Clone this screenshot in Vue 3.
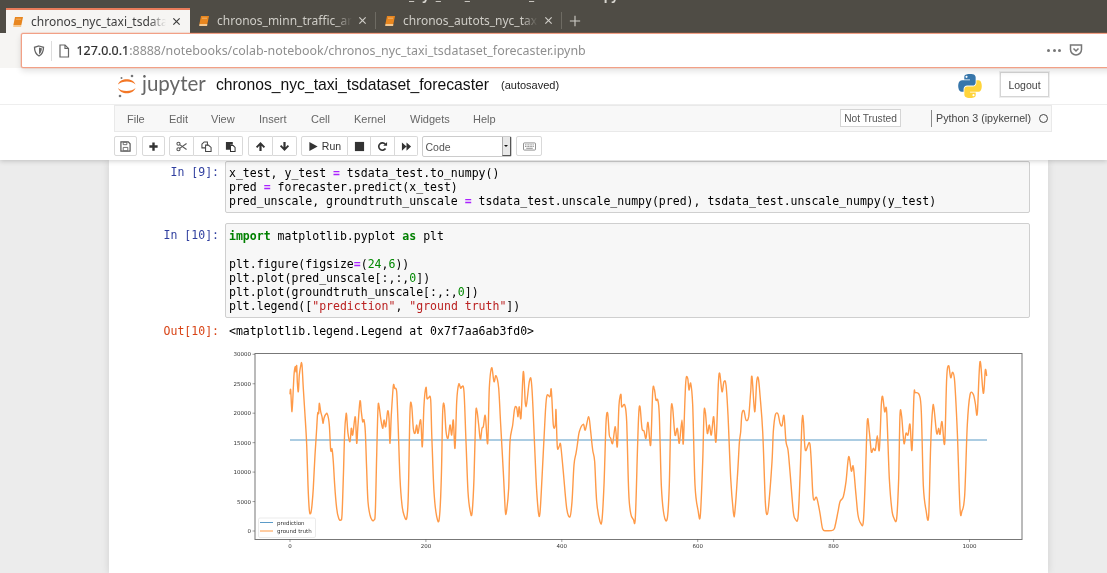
<template>
  <div class="page">
    <div class="wm-title">chronos_nyc_taxi_tsdataset_forecaster.ipynb</div>

    <div class="tabstrip">
      <div v-for="(tab, i) in tabs" :key="tab" class="tab" :class="{ active: i === 0, sep: i > 0 }">
        <svg class="tab-icon" viewBox="0 0 12 12">
          <path d="M3 1h8l-1.600 8H1.400z" fill="#e8861f" />
          <path d="M1.400 9h8l-.3 2H1.200z" fill="#f5c78e" />
          <path d="M4 3.200h5" stroke="#f5c78e" stroke-width=".7" />
        </svg>
        <span class="tab-text">{{ tab }}</span>
        <svg class="tab-close" viewBox="0 0 10 10"><path d="M1.500 1.500l7 7M8.500 1.500l-7 7" /></svg>
      </div>
      <svg class="newtab" viewBox="0 0 14 14"><path d="M7 1v12M1 7h12" /></svg>
    </div>

    <div class="urlrow">
      <div class="urlbar">
        <svg class="shield" viewBox="0 0 12 12">
          <path d="M6 1l4.500 1.300c0 4-1 7-4.500 8.700C2.500 9.300 1.500 6.300 1.500 2.300z" fill="#fff" stroke="#666" stroke-width="1.300" />
          <path d="M6 2.500l2.800.8C8.800 6 8 8 6 9.300z" fill="#666" />
        </svg>
        <span class="url-sep"></span>
        <svg class="pageicon" viewBox="0 0 12 14">
          <path d="M2 1h5l3.500 3.500V13H2z" fill="none" stroke="#666" stroke-width="1.200" />
          <path d="M7 1v3.500h3.500" fill="none" stroke="#666" stroke-width="1.200" />
        </svg>
        <span class="url"><b>127.0.0.1</b>:8888/notebooks/colab-notebook/chronos_nyc_taxi_tsdataset_forecaster.ipynb</span>
        <span class="dots"><i></i><i></i><i></i></span>
        <svg class="pocket" viewBox="0 0 14 14">
          <path d="M1.500 2h11v4.500a5.500 5.500 0 0 1-11 0z" fill="none" stroke="#777" stroke-width="1.500" />
          <path d="M4.500 5.500L7 8l2.500-2.500" fill="none" stroke="#777" stroke-width="1.500" />
        </svg>
      </div>
    </div>

    <header class="site-header">
      <div class="brand-row">
        <svg class="jp-mark" viewBox="0 0 20 24">
          <path d="M1 10.500C3 3.500 16 3.500 18.500 10.500C15 6.500 5 6.500 1 10.500z" fill="#f37726" />
          <path d="M1 14C4 18 15 18 18.500 14C16 21 3.500 21 1 14z" fill="#f37726" />
          <circle cx="15" cy="2" r="1.300" fill="#767677" />
          <circle cx="4.500" cy="4" r="1" fill="#767677" />
          <circle cx="3" cy="22" r="1.300" fill="#767677" />
        </svg>
        <span class="jp-word">jupyter</span>
        <span class="nb-name">chronos_nyc_taxi_tsdataset_forecaster</span>
        <span class="autosaved">(autosaved)</span>
        <svg class="py-logo" viewBox="0 0 110 110">
          <path fill="#3776ab" d="M54.900 0c-4.600 0-9 .4-12.800 1.100C30.800 3.100 28.800 7.200 28.800 14.900V25h26v3.400H19.100c-7.600 0-14.200 4.600-16.300 13.200-2.400 9.900-2.500 16 0 26.300 1.800 7.700 6.300 13.200 13.800 13.200h9V68.900c0-8.600 7.400-16.100 16.300-16.100h26c7.200 0 13-6 13-13.200V14.900c0-7.100-6-12.400-13-13.600C63.500.4 59 0 54.900 0z" />
          <path fill="#ffd43b" d="M55.100 110c4.600 0 9-.4 12.800-1.100 11.300-2 13.300-6.100 13.300-13.800V85h-26v-3.400h35.700c7.600 0 14.200-4.600 16.300-13.200 2.400-9.900 2.500-16 0-26.300-1.800-7.700-6.300-13.200-13.800-13.200h-9v12.200c0 8.600-7.400 16.100-16.300 16.100h-26c-7.200 0-13 6-13 13.200v24.700c0 7.100 6 12.400 13 13.600 4.400.9 8.900 1.300 13 1.300z" />
          <circle cx="39" cy="13" r="5" fill="#fff" />
          <circle cx="71" cy="97" r="5" fill="#fff" />
        </svg>
        <span class="logout">Logout</span>
      </div>

      <nav class="menubar">
        <span v-for="m in menus" :key="m.label" class="menu-item" :style="{ width: m.w + 'px' }">{{ m.label }}</span>
        <span class="not-trusted">Not Trusted</span>
        <span class="kernel">Python 3 (ipykernel)</span>
        <span class="kernel-dot"></span>
      </nav>

      <div class="toolbar">
        <div class="btn-group">
          <button class="tb w23"><svg viewBox="0 0 12 12"><path d="M1 1h8l2 2v8H1z" fill="none" stroke="#555" stroke-width="1.300" /><path d="M3.500 1.500h4v2.500h-4zM3.500 7h5v3.500h-5z" fill="#fff" stroke="#555" stroke-width=".9" /></svg></button>
        </div>
        <div class="btn-group">
          <button class="tb w23"><svg viewBox="0 0 12 12"><path d="M6 1.500v9M1.500 6h9" stroke="#333" stroke-width="2.600" fill="none" /></svg></button>
        </div>
        <div class="btn-group">
          <button class="tb w25"><svg viewBox="0 0 12 12"><g fill="none" stroke="#555" stroke-width="1.200"><circle cx="2.700" cy="3" r="1.700" /><circle cx="2.700" cy="9" r="1.700" /><path d="M4 4l7.500 5.200M4 8l7.500-5.200" /></g></svg></button>
          <button class="tb w25"><svg viewBox="0 0 12 12"><g fill="#fff" stroke="#444" stroke-width="1.100"><path d="M1 3.500L3.500 1H7v6.500H1z" /><path d="M5 4.500h3L11 7v4.500H5z" /></g></svg></button>
          <button class="tb w24"><svg viewBox="0 0 12 12"><path d="M1 1h7.500v3H5.500v5.500H1z" fill="#333" /><path d="M6 5h3l2 2v4.500H6z" fill="#fff" stroke="#333" stroke-width="1.100" /></svg></button>
        </div>
        <div class="btn-group">
          <button class="tb w25"><svg viewBox="0 0 12 12"><path d="M6 1L1 6.200l1.500 1.500 2.300-2.400V11h2.400V5.300l2.300 2.400L11 6.200z" fill="#333" /></svg></button>
          <button class="tb w24"><svg viewBox="0 0 12 12"><path d="M6 11l-5-5.200 1.500-1.500 2.300 2.400V1h2.400v5.700l2.300-2.400L11 5.800z" fill="#333" /></svg></button>
        </div>
        <div class="btn-group">
          <button class="tb run"><svg viewBox="0 0 12 12"><path d="M1.500 1l9 5-9 5z" fill="#333" /></svg><span>Run</span></button>
          <button class="tb w23"><svg viewBox="0 0 12 12"><path d="M1 1h10v10H1z" fill="#333" /></svg></button>
          <button class="tb w24"><svg viewBox="0 0 12 12"><path d="M9.300 8.200A4 4 0 1 1 9 3.500" fill="none" stroke="#333" stroke-width="1.800" /><path d="M11 1v4.200H6.800z" fill="#333" /></svg></button>
          <button class="tb w23"><svg viewBox="0 0 12 12"><path d="M1 1.500L6 6l-5 4.500zM6 1.500L11 6l-5 4.500z" fill="#333" /></svg></button>
        </div>
        <div class="select">
          <span>Code</span>
          <span class="select-arrow"></span>
        </div>
        <div class="btn-group">
          <button class="tb kbd"><svg viewBox="0 0 16 10"><rect x=".6" y=".6" width="14.800" height="8.800" rx="1" fill="#fff" stroke="#777" stroke-width="1" /><path d="M2.500 3h11M2.500 5h11" stroke="#777" stroke-width="1" stroke-dasharray="1.300 .6" /><path d="M4 7.200h8" stroke="#777" stroke-width="1" /></svg></button>
        </div>
      </div>
    </header>

    <main class="nb-bg">
      <div class="notebook">
        <div class="cell">
          <div class="prompt in">In [9]:</div>
          <pre class="input">x_test, y_test <i>=</i> tsdata_test.to_numpy()
pred <i>=</i> forecaster.predict(x_test)
pred_unscale, groundtruth_unscale <i>=</i> tsdata_test.unscale_numpy(pred), tsdata_test.unscale_numpy(y_test)</pre>
        </div>
        <div class="cell tall">
          <div class="prompt in">In [10]:</div>
          <pre class="input"><b>import</b> matplotlib.pyplot <b>as</b> plt

plt.figure(figsize<i>=</i>(<u>24</u>,<u>6</u>))
plt.plot(pred_unscale[:,:,<u>0</u>])
plt.plot(groundtruth_unscale[:,:,<u>0</u>])
plt.legend([<s>"prediction"</s>, <s>"ground truth"</s>])</pre>
        </div>
        <div class="cell out-cell">
          <div class="prompt out">Out[10]:</div>
          <pre class="output">&lt;matplotlib.legend.Legend at 0x7f7aa6ab3fd0&gt;</pre>
        </div>

        <svg class="chart" viewBox="220 345 810 210" width="810" height="210">
          <rect x="255" y="353.500" width="767" height="186" fill="#fff" stroke="#777" stroke-width="1" />
          <g v-for="t in yTicks" :key="t.label">
            <path :d="`M252.500 ${t.y}H255`" stroke="#444" stroke-width=".5" />
            <text x="251" :y="t.y + 2" text-anchor="end" class="tick">{{ t.label }}</text>
          </g>
          <g v-for="t in xTicks" :key="t.label">
            <path :d="`M${t.x} 539.500v2.500`" stroke="#444" stroke-width=".5" />
            <text :x="t.x" y="548" text-anchor="middle" class="tick">{{ t.label }}</text>
          </g>
          <path d="M290 440H987" stroke="#8fbbd9" stroke-width="1.600" fill="none" />
          <path :d="truthPath" fill="none" stroke="#ff9a48" stroke-width="1.400" stroke-linejoin="round" />
          <rect x="258.500" y="518" width="57" height="19.500" rx="1.500" fill="#fff" fill-opacity=".9" stroke="#ddd" stroke-width=".6" />
          <path d="M260 522.500h13" stroke="#5b9bc8" stroke-width="1" />
          <path d="M260 531h13" stroke="#ff9a45" stroke-width="1" />
          <text x="277" y="524.500" class="tick">prediction</text>
          <text x="277" y="533" class="tick">ground truth</text>
        </svg>
      </div>
    </main>
  </div>
</template>

<script setup>
const tabs = ['chronos_nyc_taxi_tsdataset_forecaster', 'chronos_minn_traffic_anomaly_detector', 'chronos_autots_nyc_taxi_forecaster']

const menus = [
  { label: 'File', w: 42 },
  { label: 'Edit', w: 42 },
  { label: 'View', w: 48 },
  { label: 'Insert', w: 52 },
  { label: 'Cell', w: 43 },
  { label: 'Kernel', w: 56 },
  { label: 'Widgets', w: 63 },
  { label: 'Help', w: 40 },
]

const yTicks = [30000, 25000, 20000, 15000, 10000, 5000, 0].map((v) => ({
  label: String(v),
  y: 531 - (v / 30000) * 176.7,
}))
const xTicks = [0, 200, 400, 600, 800, 1000].map((v) => ({
  label: String(v),
  x: 290 + v * 0.6795,
}))

// traced from the plot, in 3x crop coordinates of two crops
const leftTrace = [
  210,148, 212,135, 216,200, 220,130, 222,90, 226,65, 228,80, 230,62, 232,110, 235,140, 238,90, 243,58, 246,60, 250,130,
  255,210, 260,300, 264,420, 268,495, 272,505, 276,480, 280,430, 285,330, 290,250, 293,205, 296,205, 298,175, 302,200,
  306,215, 309,235, 312,220, 316,210, 322,207, 328,240, 332,315, 336,312, 340,350, 344,420, 350,490, 356,520, 362,525,
  366,510, 370,400, 374,260, 378,210, 380,212, 384,265, 390,290, 394,250, 398,270, 406,215, 410,295, 414,240, 420,168,
  424,200, 428,230, 432,225, 436,260, 440,375, 444,470, 450,510, 456,525, 462,525, 466,500, 470,330, 474,190, 477,182,
  482,220, 488,250, 492,225, 497,245, 503,198, 507,220, 510,295, 514,210, 520,123, 524,130, 530,140, 534,230, 540,400,
  546,480, 552,510, 560,520, 565,450, 570,200, 575,183, 580,250, 585,265, 590,240, 594,265, 602,225, 607,305, 612,180,
  618,127, 621,160, 626,158, 632,165, 636,290, 642,440, 650,515, 658,520, 664,400, 668,200, 673,183, 678,258, 684,280,
  690,240, 695,270, 700,225, 705,310, 710,170, 716,118, 722,130, 726,125, 732,140, 738,290, 744,440, 750,495, 756,505,
  762,400, 767,210, 771,198, 776,240, 781,283, 786,250, 790,245, 796,212, 803,295, 808,130, 815,68, 822,110, 828,92,
  836,130, 842,240, 850,380, 856,498, 860,495, 866,430, 870,290, 878,240, 884,190, 890,188, 894,215, 898,185, 903,218,
  910,80, 916,175, 920,175, 928,110, 934,108, 940,210, 948,400, 955,500, 960,503, 966,400, 974,240, 980,155, 990,155,
  994,135, 1000,240, 1006,240, 1008,195, 1012,305, 1018,303, 1022,300, 1030,380, 1040,490, 1050,515, 1056,470, 1062,360,
  1068,325, 1072,300, 1078,260, 1090,238, 1096,255, 1106,215, 1112,260, 1118,315, 1124,350, 1130,470, 1140,530, 1146,525,
  1152,420, 1158,235, 1163,205, 1168,270, 1172,280, 1178,295, 1186,245, 1192,305, 1197,180, 1203,148,
]
const rightTrace = [
  5,185, 14,180, 20,230, 26,440, 32,505, 40,523, 46,520, 52,330, 56,210, 60,185, 66,250, 72,258, 78,280, 84,232, 92,300,
  98,140, 103,132, 108,165, 113,165, 118,210, 124,420, 132,510, 142,520, 148,420, 153,200, 158,190, 165,270, 172,250,
  178,295, 186,225, 190,295, 197,115, 203,100, 207,135, 212,115, 218,180, 225,420, 234,495, 241,512, 248,350, 252,205,
  256,200, 262,265, 268,240, 274,270, 281,215, 288,290, 295,120, 299,85, 306,140, 312,110, 318,120, 324,210, 332,400,
  340,500, 344,505, 352,400, 358,295, 362,260, 366,205, 372,198, 378,225, 386,215, 392,140, 396,95, 404,200, 410,110,
  415,100, 420,150, 428,260, 436,470, 442,508, 448,460, 456,350, 460,260, 466,210, 474,207, 480,235, 486,242, 492,212,
  498,290, 504,315, 510,380, 520,500, 526,522, 534,518, 540,400, 546,230, 550,225, 556,315, 570,298, 578,440, 582,465,
  590,458, 600,505, 608,552, 620,557, 640,555, 646,540, 654,500, 660,470, 670,455, 678,410, 686,335, 694,378, 700,365,
  708,450, 714,510, 722,535, 730,530, 736,400, 742,228, 748,260, 754,320, 760,310, 766,315, 772,272, 778,315, 784,180,
  788,155, 794,200, 800,200, 808,400, 815,490, 822,520, 830,520, 836,400, 840,210, 845,215, 852,295, 858,265, 864,270,
  870,238, 876,315, 882,150, 886,143, 898,150, 904,200, 910,420, 918,495, 926,512, 932,300, 938,190, 942,190, 950,265,
  956,250, 960,268, 966,230, 974,295, 980,100, 986,62, 992,98, 998,82, 1004,110, 1012,260, 1020,490, 1026,498, 1034,450,
  1042,240, 1050,150, 1060,148, 1066,175, 1072,205, 1080,50, 1090,145, 1096,75, 1100,93,
]

function toPage(trace, originX) {
  const out = []
  for (let i = 0; i < trace.length; i += 2) {
    out.push([originX + trace[i] / 3, 345 + trace[i + 1] / 3])
  }
  return out
}

// catmull-rom so the troughs come out round instead of angular
function smoothPath(pts) {
  let d = `M${pts[0][0].toFixed(1)} ${pts[0][1].toFixed(1)}`
  for (let i = 0; i < pts.length - 1; i++) {
    const p0 = pts[i - 1] || pts[i]
    const p1 = pts[i]
    const p2 = pts[i + 1]
    const p3 = pts[i + 2] || p2
    const c1x = p1[0] + (p2[0] - p0[0]) / 6
    const c1y = p1[1] + (p2[1] - p0[1]) / 6
    const c2x = p2[0] - (p3[0] - p1[0]) / 6
    const c2y = p2[1] - (p3[1] - p1[1]) / 6
    d += `C${c1x.toFixed(1)} ${c1y.toFixed(1)} ${c2x.toFixed(1)} ${c2y.toFixed(1)} ${p2[0].toFixed(1)} ${p2[1].toFixed(1)}`
  }
  return d
}

const truthPath = smoothPath([...toPage(leftTrace, 220), ...toPage(rightTrace, 620)])
</script>

<style>
html,
body {
  margin: 0;
  overflow: hidden;
}
</style>

<style scoped>
.page {
  position: relative;
  width: 1107px;
  height: 573px;
  overflow: hidden;
  display: flex;
  flex-direction: column;
  font-family: 'Liberation Sans', Arial, sans-serif;
  background: #fff;
  filter: blur(0.3px);
}

.wm-title {
  position: absolute;
  top: -13px;
  left: 359px;
  font: bold 12.5px 'Noto Sans', sans-serif;
  color: #d8d6d0;
  white-space: nowrap;
  z-index: 1;
}

.tabstrip {
  height: 33px;
  flex: none;
  box-sizing: border-box;
  padding: 8px 0 0 6px;
  background: #4f4c45;
  display: flex;
  align-items: stretch;
  color: #cfcdc7;
  font: 12px 'Noto Sans', sans-serif;
}

.tab {
  width: 186px;
  box-sizing: border-box;
  display: flex;
  align-items: center;
  padding: 0 7px 0 8px;
  position: relative;
}

.tab.active {
  width: 184px;
  padding-left: 6px;
  background: #f6f5f3;
  color: #3d3d3d;
  border-top: 2px solid #ea7c5b;
}

.tab.sep::after {
  content: '';
  position: absolute;
  right: 0;
  top: 4px;
  bottom: 4px;
  width: 1px;
  background: #6e6b63;
}

.tab-icon {
  width: 12px;
  height: 12px;
  flex: none;
  margin-right: 7px;
}

.tab-text {
  width: 135px;
  flex: none;
  overflow: hidden;
  white-space: nowrap;
  -webkit-mask-image: linear-gradient(90deg, #000 88%, transparent);
  mask-image: linear-gradient(90deg, #000 88%, transparent);
}

.tab-close {
  width: 9px;
  height: 9px;
  flex: none;
  margin-left: 6px;
  fill: none;
  stroke: currentColor;
  stroke-width: 1.300;
}

.newtab {
  width: 12px;
  height: 12px;
  align-self: center;
  margin-left: 7px;
  fill: none;
  stroke: #cfcdc7;
  stroke-width: 1.300;
}

.urlrow {
  height: 35px;
  flex: none;
  background: #f6f5f3;
  padding-left: 21px;
  position: relative;
  z-index: 3;
}

.urlbar {
  height: 35px;
  box-sizing: border-box;
  width: 1100px;
  background: #fff;
  border: 1px solid #f2a086;
  border-radius: 2px;
  box-shadow: 0 0 0 0.5px rgba(240, 130, 90, 0.35), 0 3px 6px rgba(0, 0, 0, 0.12);
  display: flex;
  align-items: center;
  padding-left: 11px;
}

.shield {
  width: 12px;
  height: 12px;
  flex: none;
}

.url-sep {
  width: 1px;
  height: 20px;
  background: #ddd;
  margin: 0 6px 0 6px;
  flex: none;
}

.pageicon {
  width: 12px;
  height: 14px;
  flex: none;
  margin-right: 6.500px;
}

.url {
  font: 12.45px 'Noto Sans', sans-serif;
  color: #8f8f8f;
  white-space: nowrap;
  width: 992px;
  flex: none;
  box-sizing: border-box;
}

.url b {
  font-weight: 400;
  color: #2f2f2f;
  -webkit-text-stroke: 0.2px #2f2f2f;
}

.dots {
  position: absolute;
  left: 1047px;
  top: 16px;
  display: flex;
  gap: 2.500px;
}

.dots i {
  width: 3px;
  height: 3px;
  border-radius: 50%;
  background: #777;
}

.pocket {
  position: absolute;
  left: 1069px;
  top: 10px;
  width: 14px;
  height: 14px;
}

.site-header {
  height: 92px;
  flex: none;
  background: #fff;
  box-shadow: 0 1px 5px rgba(0, 0, 0, 0.2);
  position: relative;
  z-index: 2;
  box-sizing: border-box;
}

.brand-row {
  height: 37px;
  box-sizing: border-box;
  border-bottom: 1px solid #eee;
  display: flex;
  align-items: center;
  padding-left: 117px;
}

.jp-mark {
  width: 20px;
  height: 24px;
  flex: none;
  margin-right: 5px;
}

.jp-word {
  font: 400 20.5px 'Lato', sans-serif;
  color: #666;
  width: 74px;
  flex: none;
  margin-top: -6px;
}

.nb-name {
  font-size: 15.700px;
  color: #111;
  width: 285px;
  flex: none;
  margin-top: -3px;
}

.autosaved {
  font-size: 11px;
  color: #222;
  width: 457px;
  flex: none;
  margin-top: -2px;
}

.py-logo {
  width: 24px;
  height: 24px;
  flex: none;
  margin-right: 18px;
}

.logout {
  width: 49px;
  height: 25px;
  flex: none;
  box-sizing: border-box;
  border: 1px solid #d5d5d5;
  outline: 1px solid #eee;
  font-size: 10.500px;
  color: #444;
  display: flex;
  align-items: center;
  justify-content: center;
  margin-bottom: 3px;
}

.menubar {
  margin-left: 114px;
  width: 938px;
  height: 27px;
  box-sizing: border-box;
  background: #f8f8f8;
  border: 1px solid #e9e9e9;
  display: flex;
  align-items: center;
  padding-left: 12px;
  font-size: 11px;
  color: #666;
  position: relative;
}

.menu-item {
  flex: none;
}

.not-trusted {
  position: absolute;
  left: 725px;
  top: 3px;
  width: 61px;
  height: 18px;
  box-sizing: border-box;
  background: #fff;
  border: 1px solid #d5d5d5;
  font-size: 10.200px;
  color: #555;
  display: flex;
  align-items: center;
  justify-content: center;
}

.kernel {
  position: absolute;
  left: 816px;
  top: 4px;
  height: 17px;
  line-height: 17px;
  border-left: 1px solid #888;
  padding-left: 4px;
  color: #444;
  font-size: 10.700px;
}

.kernel-dot {
  position: absolute;
  left: 923.500px;
  top: 8px;
  width: 9px;
  height: 9px;
  box-sizing: border-box;
  border: 1.500px solid #444;
  border-radius: 50%;
}

.toolbar {
  margin: 4px 0 0 114px;
  height: 20px;
  display: flex;
  align-items: stretch;
  gap: 4.500px;
}

.btn-group {
  display: flex;
}

.tb {
  height: 20px;
  box-sizing: border-box;
  padding: 0;
  margin: 0;
  border: 1px solid #d9d9d9;
  border-left-width: 0;
  border-radius: 0;
  background: #fff;
  display: flex;
  align-items: center;
  justify-content: center;
  font: 10.500px 'Liberation Sans', sans-serif;
  color: #333;
}

.btn-group .tb:first-child {
  border-left-width: 1px;
  border-radius: 2px 0 0 2px;
}

.btn-group .tb:last-child {
  border-radius: 0 2px 2px 0;
}

.btn-group .tb:only-child {
  border-radius: 2px;
}

.tb svg {
  width: 11px;
  height: 11px;
}

.w23 {
  width: 23px;
}

.w24 {
  width: 24px;
}

.w25 {
  width: 25px;
}

.run {
  width: 47px;
  gap: 3px;
}

.kbd {
  width: 26px;
}

.kbd svg {
  width: 13px;
}

.select {
  width: 90px;
  height: 21px;
  margin-left: -1px;
  box-sizing: border-box;
  background: #fff;
  border: 1px solid #ccc;
  border-radius: 2px;
  font-size: 10.500px;
  color: #555;
  display: flex;
  align-items: center;
  padding-left: 3px;
  position: relative;
}

.select-arrow {
  position: absolute;
  right: 0;
  top: 0;
  bottom: 0;
  width: 9px;
  background: #e8e8e8;
  border-left: 1px solid #aaa;
  border-right: 1px solid #555;
  border-bottom: 1px solid #555;
  box-sizing: border-box;
}

.select-arrow::after {
  content: '';
  position: absolute;
  left: 1.500px;
  top: 8px;
  border: 2.500px solid transparent;
  border-top-color: #111;
}

.nb-bg {
  flex: 1;
  background: #ececec;
  padding-left: 109px;
  min-height: 0;
}

.notebook {
  width: 939px;
  height: 100%;
  background: #fff;
  box-shadow: 0 0 8px rgba(0, 0, 0, 0.12);
  box-sizing: border-box;
  padding-top: 1px;
}

.cell {
  display: flex;
  margin-bottom: 10px;
}

.prompt {
  width: 110px;
  box-sizing: border-box;
  padding: 4px 0 0 0;
  flex: none;
  text-align: right;
  font: 11.530px/14px 'DejaVu Sans Mono', monospace;
}

.prompt.in {
  color: #303f9f;
}

.prompt.out {
  color: #d84315;
  padding-top: 0;
}

.input {
  width: 805px;
  margin: 0 0 0 6px;
  box-sizing: border-box;
  padding: 4px 3px;
  background: #f7f7f7;
  border: 1px solid #cfcfcf;
  border-radius: 2px;
  font: 11.530px/14px 'DejaVu Sans Mono', monospace;
  color: #000;
}

.tall .input {
  padding: 5px 3px 4px;
}

.tall .prompt {
  padding-top: 5px;
}

.input i {
  font-style: normal;
  font-weight: bold;
  color: #a2f;
}

.input b {
  color: #008000;
}

.input u {
  text-decoration: none;
  color: #080;
}

.input s {
  text-decoration: none;
  color: #ba2121;
}

.out-cell {
  margin: -4px 0 7px;
}

.output {
  margin: 0 0 0 10px;
  font: 11.530px/14px 'DejaVu Sans Mono', monospace;
  color: #000;
}

.chart {
  display: block;
  margin-left: 111px;
}

.tick {
  font: 5.500px 'DejaVu Sans', sans-serif;
  fill: #333;
}
</style>
